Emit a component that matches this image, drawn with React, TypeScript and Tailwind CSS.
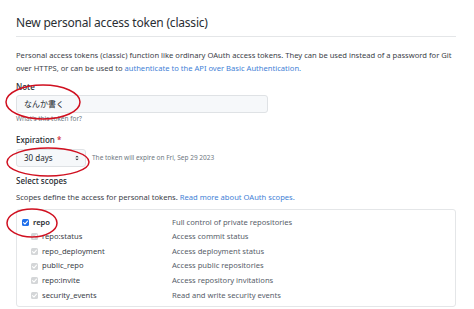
import React from "react";

const Check = ({ color }: { color: string }) => (
  <svg viewBox="0 0 10 10" className="w-full h-full">
    <path d="M2.2 5.2 L4.2 7.2 L7.8 3" fill="none" stroke={color} strokeWidth="1.5" strokeLinecap="round" strokeLinejoin="round" />
  </svg>
);

const rows = [
  ["repo:status", "Access commit status"],
  ["repo_deployment", "Access deployment status"],
  ["public_repo", "Access public repositories"],
  ["repo:invite", "Access repository invitations"],
  ["security_events", "Read and write security events"],
];

export default function App() {
  return (
    <div className="relative w-[474px] h-[309px] bg-white overflow-hidden text-[#24292f]" style={{ fontFamily: '"Noto Sans", "Noto Sans CJK JP", sans-serif' }}>
      <div className="pl-[16px] pr-[18px] pt-[14px]">
        <div className="text-[12px] leading-[18px] tracking-[-0.2px] pb-[4px] border-b border-[#e4e6e8] text-[#2a2e33]">New personal access token (classic)</div>
        <div className="text-[7.6px] leading-[13px] text-[#3b4148] mt-[12px]">
          Personal access tokens (classic) function like ordinary OAuth access tokens. They can be used instead of a password for Git over HTTPS, or can be used to <span className="text-[#3f7fd6]">authenticate to the API over Basic Authentication.</span>
        </div>
        <div className="text-[8px] leading-[11px] font-medium mt-[6px]">Note</div>
        <div className="w-[252px] h-[18px] mt-[3px] border border-[#dfe2e5] bg-[#f6f8fa] rounded-[3px] flex items-center pl-[7px] text-[8px]">なんか書く</div>
        <div className="text-[6.5px] leading-[10px] text-[#6e7781] mt-[1px]">What's this token for?</div>
        <div className="text-[8px] leading-[11px] font-medium mt-[10px]">Expiration <span className="text-[#cf222e]">*</span></div>
        <div className="flex items-center mt-[4px]">
          <div className="w-[70px] h-[18px] border border-[#dfe2e5] bg-[#f6f8fa] rounded-[3px] flex items-center justify-between pl-[7px] pr-[6px] text-[8px]">
            <span>30 days</span>
            <svg viewBox="0 0 6 8" className="w-[4px] h-[6px]"><path d="M0.5 3 L3 0.5 L5.5 3 Z M0.5 5 L3 7.5 L5.5 5 Z" fill="#24292f" /></svg>
          </div>
          <span className="ml-[6px] text-[6.5px] text-[#6e7781]">The token will expire on Fri, Sep 29 2023</span>
        </div>
        <div className="text-[8px] leading-[11px] font-medium mt-[8px]">Select scopes</div>
        <div className="text-[7.6px] leading-[12px] text-[#3b4148] mt-[5px]">
          Scopes define the access for personal tokens. <span className="text-[#3f7fd6]">Read more about OAuth scopes.</span>
        </div>
        <div className="mt-[6px] border border-[#e4e6e8] rounded-[3px] pt-[5px] pb-[3px] text-[7.6px]">
          <div className="flex items-center h-[14.6px]">
            <div className="w-[155px] flex items-center pl-[5px]">
              <span className="w-[7px] h-[7px] rounded-[1.5px] bg-[#1f6feb] block"><Check color="#fff" /></span>
              <span className="ml-[4px] font-semibold">repo</span>
            </div>
            <span className="text-[#57606a]">Full control of private repositories</span>
          </div>
          {rows.map(([a, b]) => (
            <div key={a} className="flex items-center h-[14.6px]">
              <div className="w-[155px] flex items-center pl-[14px]">
                <span className="w-[7px] h-[7px] rounded-[1.5px] bg-[#d4d6d8] block"><Check color="#fff" /></span>
                <span className="ml-[4px] text-[#3b4148]">{a}</span>
              </div>
              <span className="text-[#57606a]">{b}</span>
            </div>
          ))}
        </div>
      </div>
      <svg className="absolute left-0 top-0 pointer-events-none" width="474" height="309">
        <ellipse cx="43" cy="102" rx="37" ry="17" fill="none" stroke="#d01020" strokeWidth="1.5" />
        <ellipse cx="48" cy="162" rx="41" ry="14" fill="none" stroke="#d01020" strokeWidth="1.5" />
        <ellipse cx="32" cy="223" rx="25" ry="14" fill="none" stroke="#d01020" strokeWidth="1.5" />
      </svg>
    </div>
  );
}
